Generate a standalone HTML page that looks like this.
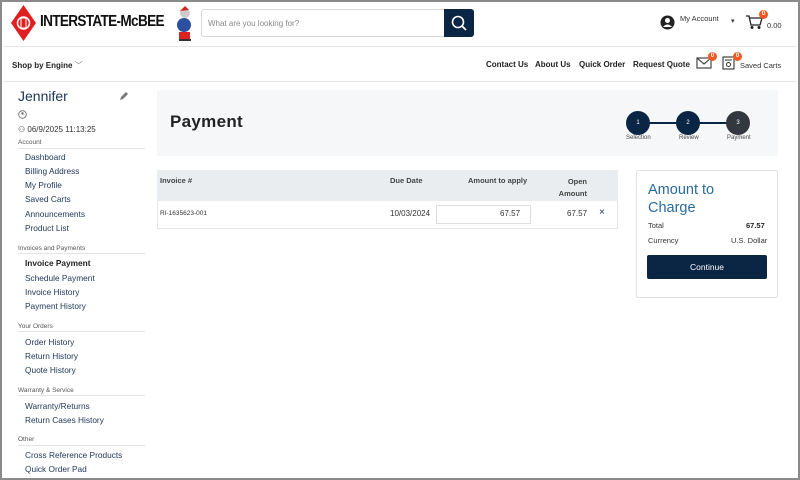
<!DOCTYPE html>
<html><head><meta charset="utf-8"><style>
*{margin:0;padding:0;box-sizing:border-box}
body{width:800px;height:480px;overflow:hidden;background:#fff;font-family:"Liberation Sans",sans-serif;color:#222;position:relative}
.a{position:absolute;white-space:nowrap}
.frame{position:absolute;left:0;top:0;width:800px;height:480px;border:2px solid #8a8a8a;pointer-events:none}
.hr{position:absolute;left:2px;right:2px;height:1px;background:#e6e6e6}
.nav{font-size:8px;font-weight:bold;color:#222}
.sb{font-size:8.3px;color:#1d3557;left:25px}
.sh{font-size:6.5px;color:#555;left:18px}
.sl{position:absolute;left:18px;width:127px;height:1px;background:#e4e4e4}
.badge{position:absolute;width:9px;height:9px;border-radius:50%;background:#f05a22;color:#fff;font-size:6px;font-weight:bold;text-align:center;line-height:9px}
.step{position:absolute;width:24px;height:24px;border-radius:50%;background:#0b2545;color:#fff;font-size:6px;text-align:center;line-height:24px}
.sl2{font-size:6px;color:#444}
.th{font-size:7.5px;font-weight:bold;color:#444}
</style></head><body>
<svg class="a" style="left:11px;top:5px" width="25" height="37" viewBox="0 0 25 37"><polygon points="12.5,0 25,18 12.5,36 0,18" fill="#e02020"/><circle cx="12.5" cy="18" r="6" fill="none" stroke="#fff" stroke-width="1.5"/><rect x="10" y="13" width="5" height="10" fill="none" stroke="#fff" stroke-width="1"/></svg>
<div class="a" style="left:40px;top:13px;font-size:16px;font-weight:bold;letter-spacing:-0.8px;color:#111;transform:scaleX(0.85);transform-origin:left">INTERSTATE-McBEE</div>
<svg class="a" style="left:174px;top:5px" width="22" height="37"><circle cx="11" cy="8" r="5" fill="#ccc"/><path d="M6 6 L11 1 L15 5Z" fill="#d22"/><circle cx="10" cy="20" r="7" fill="#2c4fa0"/><rect x="5" y="27" width="11" height="7" fill="#d22"/><rect x="5" y="34" width="12" height="2" fill="#333"/></svg>
<div class="a" style="left:201px;top:9px;width:244px;height:28px;border:1px solid #d8d8d8;border-radius:3px 0 0 3px"></div>
<div class="a" style="left:208px;top:19px;font-size:8px;color:#888">What are you looking for?</div>
<div class="a" style="left:444px;top:9px;width:30px;height:28px;background:#0b2545;border-radius:0 3px 3px 0"></div>
<svg class="a" style="left:450px;top:14px" width="18" height="18"><circle cx="8" cy="8" r="5.5" fill="none" stroke="#fff" stroke-width="1.6"/><line x1="12" y1="12" x2="16" y2="16" stroke="#fff" stroke-width="1.8"/></svg>
<svg class="a" style="left:660px;top:15px" width="15" height="15"><circle cx="7.5" cy="7.5" r="7" fill="#222"/><circle cx="7.5" cy="5.5" r="2.5" fill="#fff"/><path d="M3 12 Q7.5 7 12 12" fill="#fff"/></svg>
<div class="a" style="left:680px;top:14px;font-size:7.5px;color:#333">My Account</div>
<div class="a" style="left:731px;top:17px;font-size:7px;color:#333">▾</div>
<svg class="a" style="left:745px;top:14px" width="18" height="16"><path d="M1 2 H4 L6 11 H15 L17 4 H5" fill="none" stroke="#222" stroke-width="1.3"/><circle cx="7" cy="13.5" r="1.5" fill="#222"/><circle cx="14" cy="13.5" r="1.5" fill="#222"/></svg>
<div class="badge" style="left:759px;top:10px">0</div>
<div class="a" style="left:767px;top:21px;font-size:7.5px;color:#333">0.00</div>
<div class="hr" style="top:46px"></div>
<div class="a nav" style="left:12px;top:60px">Shop by Engine <span style="font-weight:normal;color:#777">﹀</span></div>
<div class="a nav" style="left:486px;top:60px">Contact Us</div>
<div class="a nav" style="left:535px;top:60px">About Us</div>
<div class="a nav" style="left:579px;top:60px">Quick Order</div>
<div class="a nav" style="left:633px;top:60px">Request Quote</div>
<svg class="a" style="left:696px;top:57px" width="16" height="12"><rect x="1" y="1" width="14" height="10" fill="none" stroke="#333" stroke-width="1.1"/><path d="M1 1 L8 7 L15 1" fill="none" stroke="#333" stroke-width="1.1"/></svg>
<div class="badge" style="left:708px;top:52px">0</div>
<svg class="a" style="left:722px;top:56px" width="13" height="14"><rect x="1" y="1" width="11" height="12" fill="none" stroke="#333" stroke-width="1.1"/><circle cx="6.5" cy="8.5" r="2" fill="none" stroke="#333"/><line x1="3" y1="4" x2="10" y2="4" stroke="#333"/></svg>
<div class="badge" style="left:733px;top:52px">0</div>
<div class="a" style="left:740px;top:61px;font-size:7.5px;color:#333">Saved Carts</div>
<div class="hr" style="top:81px"></div>
<div class="a" style="left:18px;top:88px;font-size:14px;color:#1d3557">Jennifer</div>
<svg class="a" style="left:118px;top:91px" width="11" height="11"><path d="M2 9 L3 6 L8 1 L10 3 L5 8Z" fill="#777"/></svg>
<svg class="a" style="left:18px;top:110px" width="9" height="9"><circle cx="4.5" cy="4.5" r="3.8" fill="none" stroke="#666" stroke-width="0.8"/><circle cx="4.5" cy="3.5" r="1.2" fill="#666"/></svg>
<div class="a" style="left:18px;top:125px;font-size:8px;color:#333">⚇ 06/9/2025 11:13:25</div>
<div class="a sh" style="top:139px">Account</div><div class="sl" style="top:148px"></div>
<div class="a sb" style="top:152px">Dashboard</div>
<div class="a sb" style="top:166px">Billing Address</div>
<div class="a sb" style="top:180px">My Profile</div>
<div class="a sb" style="top:194px">Saved Carts</div>
<div class="a sb" style="top:209px">Announcements</div>
<div class="a sb" style="top:223px">Product List</div>
<div class="a sh" style="top:245px">Invoices and Payments</div><div class="sl" style="top:253px"></div>
<div class="a sb" style="top:258px;font-weight:bold;color:#222">Invoice Payment</div>
<div class="a sb" style="top:273px">Schedule Payment</div>
<div class="a sb" style="top:287px">Invoice History</div>
<div class="a sb" style="top:301px">Payment History</div>
<div class="a sh" style="top:323px">Your Orders</div><div class="sl" style="top:331px"></div>
<div class="a sb" style="top:337px">Order History</div>
<div class="a sb" style="top:351px">Return History</div>
<div class="a sb" style="top:365px">Quote History</div>
<div class="a sh" style="top:387px">Warranty &amp; Service</div><div class="sl" style="top:395px"></div>
<div class="a sb" style="top:401px">Warranty/Returns</div>
<div class="a sb" style="top:415px">Return Cases History</div>
<div class="a sh" style="top:436px">Other</div><div class="sl" style="top:445px"></div>
<div class="a sb" style="top:450px">Cross Reference Products</div>
<div class="a sb" style="top:464px">Quick Order Pad</div>
<div class="a" style="left:157px;top:90px;width:621px;height:66px;background:#f6f7f9"></div>
<div class="a" style="left:170px;top:112px;font-size:17px;font-weight:bold;color:#222;letter-spacing:0.3px">Payment</div>
<div class="a" style="left:638px;top:122px;width:100px;height:2px;background:#0b2545"></div>
<div class="step" style="left:626px;top:111px">1</div>
<div class="step" style="left:676px;top:111px">2</div>
<div class="step" style="left:726px;top:111px;background:#333840">3</div>
<div class="a sl2" style="left:626px;top:135px">Selection</div>
<div class="a sl2" style="left:679px;top:135px">Review</div>
<div class="a sl2" style="left:727px;top:135px">Payment</div>
<div class="a" style="left:157px;top:170px;width:461px;height:59px;border:1px solid #e6e6e6"></div>
<div class="a" style="left:157px;top:170px;width:461px;height:31px;background:#eaedf0"></div>
<div class="a th" style="left:160px;top:176px">Invoice #</div>
<div class="a th" style="left:390px;top:176px">Due Date</div>
<div class="a th" style="left:468px;top:176px">Amount to apply</div>
<div class="a th" style="left:555px;top:176px;text-align:right;width:32px;line-height:12px">Open<br>Amount</div>
<div class="a" style="left:160px;top:210px;font-size:6.5px;color:#333">RI-1635623-001</div>
<div class="a" style="left:390px;top:209px;font-size:8px;color:#333">10/03/2024</div>
<div class="a" style="left:436px;top:205px;width:95px;height:19px;border:1px solid #ddd"></div>
<div class="a" style="left:500px;top:209px;font-size:8px;color:#333">67.57</div>
<div class="a" style="left:567px;top:209px;font-size:8px;color:#333">67.57</div>
<div class="a" style="left:599px;top:207px;font-size:10px;color:#1d3557">×</div>
<div class="a" style="left:636px;top:170px;width:142px;height:128px;border:1px solid #e2e2e2;border-radius:2px"></div>
<div class="a" style="left:648px;top:181px;font-size:14.5px;color:#2a6a9e;line-height:18px">Amount to<br>Charge</div>
<div class="a" style="left:648px;top:221px;font-size:7.5px;color:#333">Total</div>
<div class="a" style="left:746px;top:221px;font-size:7.5px;font-weight:bold;color:#222">67.57</div>
<div class="a" style="left:648px;top:236px;font-size:7.5px;color:#333">Currency</div>
<div class="a" style="left:731px;top:236px;font-size:7.5px;color:#333">U.S. Dollar</div>
<div class="a" style="left:647px;top:255px;width:120px;height:24px;background:#0b2545;border-radius:2px;color:#fff;font-size:8.5px;text-align:center;line-height:24px">Continue</div>
<div class="frame"></div>
</body></html>
